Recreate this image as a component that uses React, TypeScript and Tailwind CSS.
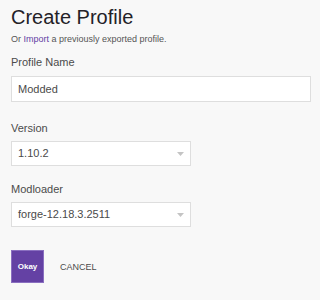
import React from 'react';

const font = { fontFamily: '"Liberation Sans", Arial, sans-serif' };

const Caret: React.FC = () => (
  <svg width="7" height="4" viewBox="0 0 7 4" className="shrink-0">
    <path d="M0 0h7L3.5 4z" fill="#c4c4c4" />
  </svg>
);

const SelectBox: React.FC<{ value: string }> = ({ value }) => (
  <div className="mt-[6px] flex h-[25px] w-[180px] items-center justify-between border border-[#dedede] bg-white pl-[6px] pr-[6px]">
    <span className="text-[11px] leading-[23px] text-[#4a4a4a]">{value}</span>
    <Caret />
  </div>
);

export default function App() {
  return (
    <div className="min-h-[300px] w-[320px] bg-[#f8f8f8] px-[11px] pt-[7px]" style={font}>
      <h1 className="text-[20px] leading-[20px] font-normal text-[#232127]">Create Profile</h1>
      <p className="mt-[6px] text-[9px] leading-[12px] text-[#555]">
        Or <span className="text-[#6441a4]">Import</span> a previously exported profile.
      </p>

      <div className="mt-[10px] text-[11px] leading-[14px] text-[#4b4b4b]">Profile Name</div>
      <div className="mt-[7px] flex h-[26px] w-[300px] items-center border border-[#dedede] bg-white pl-[6px]">
        <span className="text-[11px] leading-[24px] text-[#4a4a4a]">Modded</span>
      </div>

      <div className="mt-[19px] text-[11px] leading-[14px] text-[#4b4b4b]">Version</div>
      <SelectBox value="1.10.2" />

      <div className="mt-[16px] text-[11px] leading-[14px] text-[#4b4b4b]">Modloader</div>
      <SelectBox value="forge-12.18.3.2511" />

      <div className="mt-[23px] flex items-center gap-[16px]">
        <button className="flex h-[33px] w-[33px] items-center justify-center border border-[#8a6fc0] bg-[#6441a4] text-[8px] font-bold text-white">
          Okay
        </button>
        <span className="text-[9px] leading-[12px] text-[#4b4b4b]">CANCEL</span>
      </div>
    </div>
  );
}
